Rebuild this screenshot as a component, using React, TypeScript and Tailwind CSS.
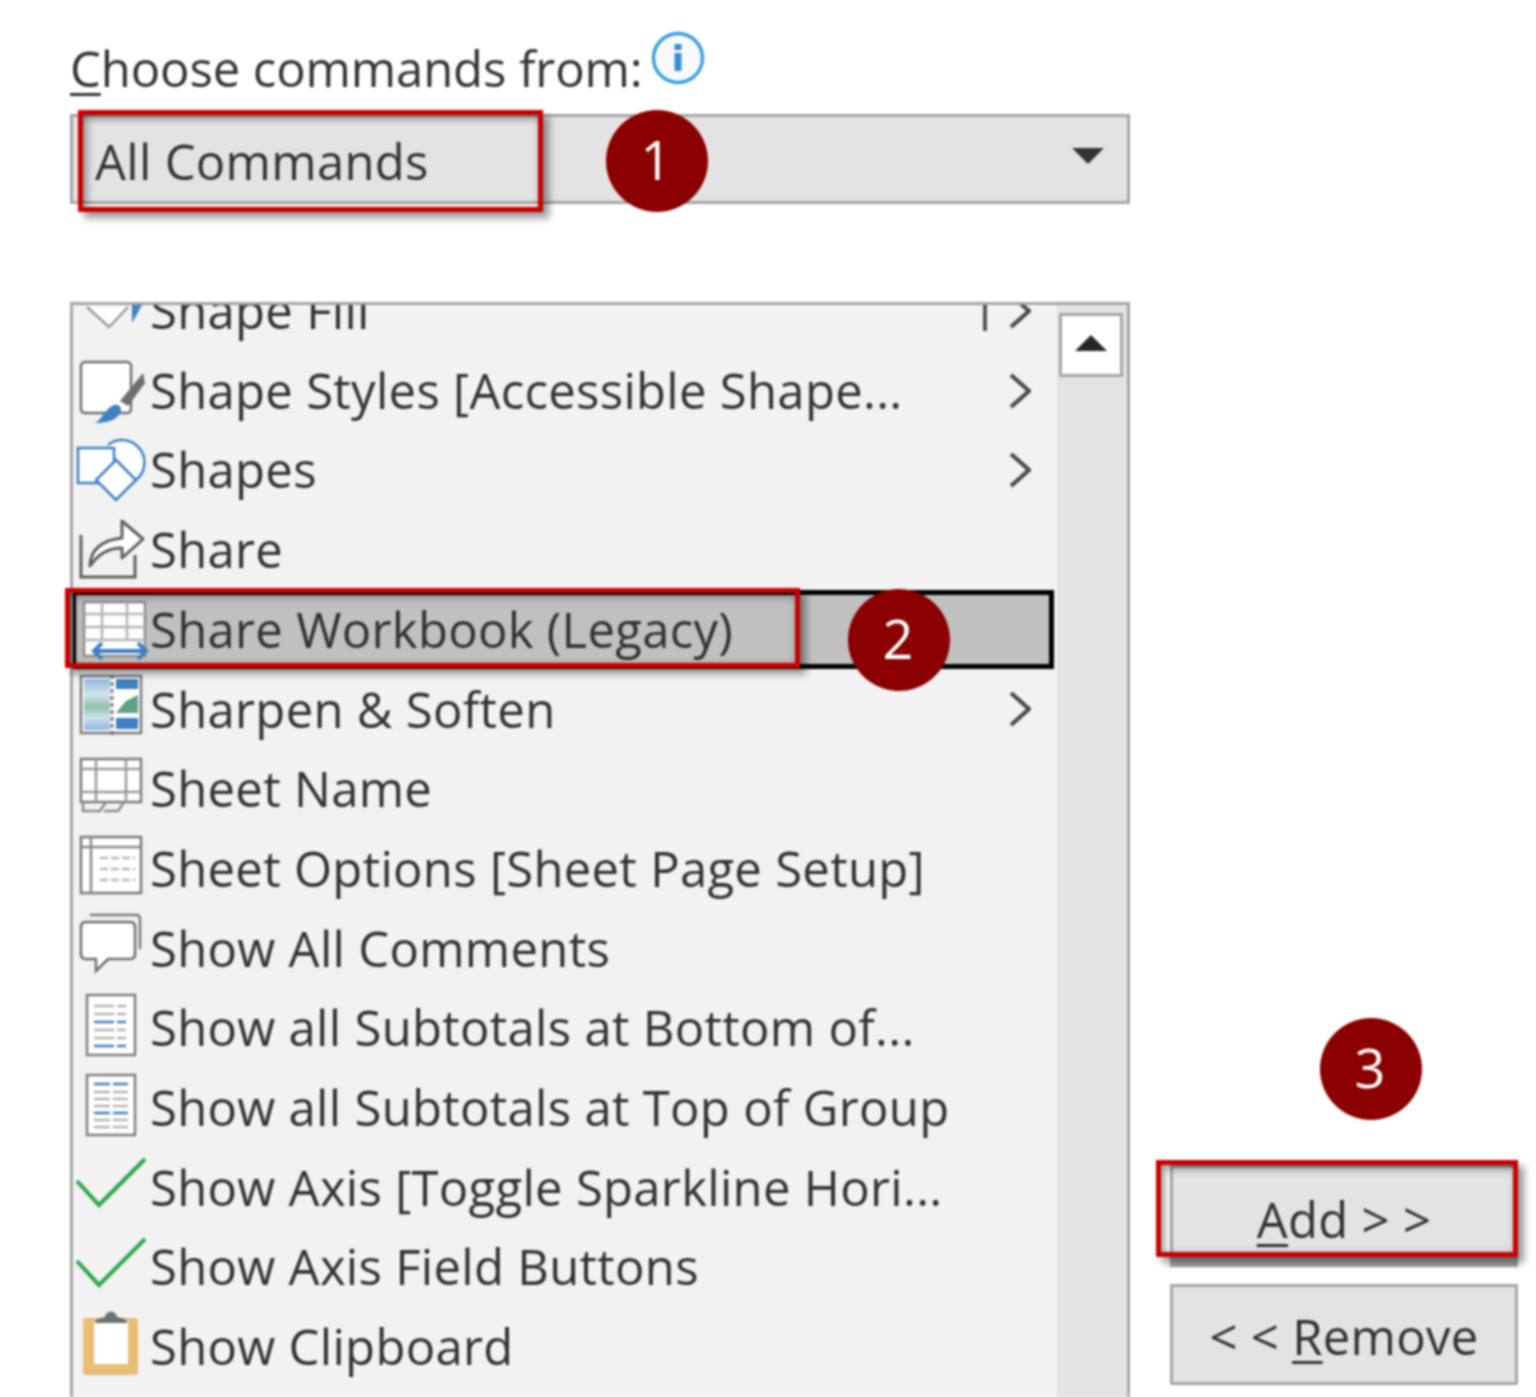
import type { ReactNode } from 'react';

const BLUE = '#3f80c4';

function Icon({ children }: { children: ReactNode }) {
  return (
    <svg className="h-[80px] w-[74px] shrink-0 overflow-visible" viewBox="0 0 74 80" fill="none">
      {children}
    </svg>
  );
}

const ICONS: Record<string, ReactNode> = {
  fill: (
    <Icon>
      <path d="M11 36 L33 56 L52 36" stroke="#9a9a9a" strokeWidth="2.5" fill="#fff" />
      <path d="M56 52 L66 34 L56 34 Z" fill={BLUE} />
    </Icon>
  ),
  styles: (
    <Icon>
      <rect x="5" y="11" width="50" height="51" rx="4" fill="#fff" stroke="#6f6f6f" strokeWidth="2.5" />
      <path d="M44 50 L67 22 L69 32 L52 55 Z" fill="#6f6f6f" />
      <path d="M19 72 C27 68 28 58 38 54 C45 52 47 60 43 64 C38 70 30 72 19 72 Z" fill={BLUE} />
    </Icon>
  ),
  shapes: (
    <Icon>
      <path d="M32 15 A22 22 0 1 1 60 50" stroke={BLUE} strokeWidth="2.5" fill="#fff" />
      <rect x="2" y="18" width="36" height="35" fill="#fff" stroke={BLUE} strokeWidth="2.5" />
      <path d="M40 30 L60 50 L40 70 L20 50 Z" fill="#fff" stroke={BLUE} strokeWidth="2.5" />
    </Icon>
  ),
  share: (
    <Icon>
      <path d="M5 25 V67 H59 V45" stroke="#5f5f5f" strokeWidth="3" />
      <path d="M14 56 C14 40 26 30 46 28 V11 L67 29 L46 48 V38 C32 38 22 44 14 56 Z" fill="#fff" stroke="#5f5f5f" strokeWidth="3" strokeLinejoin="round" />
    </Icon>
  ),
  workbook: (
    <Icon>
      <rect x="8" y="12" width="61" height="54" fill="#fff" stroke="#8a8a8a" strokeWidth="2.5" />
      <path d="M8 24 H69 M8 37 H69 M8 50 H69 M26 12 V50 M51 12 V50" stroke="#b4b4b4" strokeWidth="2.5" />
      <path d="M20 61 H68" stroke={BLUE} strokeWidth="4" />
      <path d="M26 53 L18 61 L26 69 M62 53 L70 61 L62 69" stroke={BLUE} strokeWidth="4" />
    </Icon>
  ),
  sharpen: (
    <Icon>
      <defs>
        <linearGradient id="soften" x1="0" y1="0" x2="0" y2="1">
          <stop offset="0" stopColor="#8fb8e4" />
          <stop offset="0.3" stopColor="#d5e3ef" />
          <stop offset="0.55" stopColor="#8fc2aa" />
          <stop offset="0.75" stopColor="#cfe0ea" />
          <stop offset="1" stopColor="#8fb8e4" />
        </linearGradient>
      </defs>
      <rect x="5" y="7" width="60" height="57" fill="#fff" stroke="#7a7a7a" strokeWidth="2.5" />
      <rect x="8" y="10" width="26" height="51" fill="url(#soften)" />
      <path d="M40 10 H62 V20 H40 Z" fill={BLUE} />
      <path d="M40 44 L50 32 L62 26 V44 Z" fill="#5fa08a" />
      <path d="M40 49 H62 V60 H40 Z" fill={BLUE} />
      <path d="M36 6 V66" stroke="#6a6a6a" strokeWidth="2.5" strokeDasharray="4 3" />
    </Icon>
  ),
  sheet: (
    <Icon>
      <rect x="5" y="10" width="60" height="43" fill="#fff" stroke="#7a7a7a" strokeWidth="2.5" />
      <path d="M5 20 H65 M5 43 H65 M20 10 V53 M50 10 V53" stroke="#9a9a9a" strokeWidth="2.5" />
      <path d="M7 53 V62 H24 L30 53 M28 62 H42 L48 53" stroke="#8a8a8a" strokeWidth="2.5" />
    </Icon>
  ),
  options: (
    <Icon>
      <rect x="5" y="8" width="60" height="56" fill="#fff" stroke="#7a7a7a" strokeWidth="2.5" />
      <path d="M5 18 H65 M15 8 V64" stroke="#8a8a8a" strokeWidth="2.5" />
      <path d="M24 29 H59 M24 40 H59 M24 51 H59" stroke="#b8b8b8" strokeWidth="2.5" strokeDasharray="8 3" />
    </Icon>
  ),
  comments: (
    <Icon>
      <path d="M14 7 H60 Q64 7 64 11 V41" stroke="#7a7a7a" strokeWidth="2.5" />
      <path d="M10 14 H54 Q59 14 59 19 V46 Q59 51 54 51 H32 L20 63 V51 H10 Q5 51 5 46 V19 Q5 14 10 14 Z" fill="#fff" stroke="#6f6f6f" strokeWidth="2.5" />
    </Icon>
  ),
  subBottom: (
    <Icon>
      <rect x="11" y="7" width="48" height="60" fill="#fff" stroke="#7f7f7f" strokeWidth="2.5" />
      <path d="M18 18 H50 M18 26 H50 M18 42 H50 M18 50 H50" stroke="#b4b4b4" strokeWidth="2.5" strokeDasharray="20 3 9 0" />
      <path d="M18 34 H50 M18 58 H50" stroke={BLUE} strokeWidth="2.5" strokeDasharray="20 3 9 0" />
    </Icon>
  ),
  subTop: (
    <Icon>
      <rect x="11" y="7" width="48" height="60" fill="#fff" stroke="#7f7f7f" strokeWidth="2.5" />
      <path d="M18 24 H52 M18 31 H52 M18 38 H52 M18 52 H52 M18 59 H52" stroke="#b4b4b4" strokeWidth="2.5" strokeDasharray="16 3 15 0" />
      <path d="M18 16 H52 M18 45 H52" stroke={BLUE} strokeWidth="2.5" strokeDasharray="16 3 15 0" />
    </Icon>
  ),
  check: (
    <Icon>
      <path d="M1 34 L23 58 L69 12" stroke="#2fa84f" strokeWidth="4" />
    </Icon>
  ),
  clipboard: (
    <Icon>
      <rect x="7" y="11" width="55" height="57" rx="3" fill="#e9bd76" />
      <rect x="18" y="14" width="34" height="43" fill="#fff" />
      <path d="M19 16 C19 11 26 11 29 10 C30 3 40 3 41 10 C44 11 51 11 51 16 Z" fill="#6f6f6f" />
    </Icon>
  ),
};

const ROWS = [
  { label: 'Shape Fill', icon: 'fill', arrow: true, split: true },
  { label: 'Shape Styles [Accessible Shape...', icon: 'styles', arrow: true },
  { label: 'Shapes', icon: 'shapes', arrow: true },
  { label: 'Share', icon: 'share' },
  { label: 'Share Workbook (Legacy)', icon: 'workbook', selected: true },
  { label: 'Sharpen & Soften', icon: 'sharpen', arrow: true },
  { label: 'Sheet Name', icon: 'sheet' },
  { label: 'Sheet Options [Sheet Page Setup]', icon: 'options' },
  { label: 'Show All Comments', icon: 'comments' },
  { label: 'Show all Subtotals at Bottom of...', icon: 'subBottom' },
  { label: 'Show all Subtotals at Top of Group', icon: 'subTop' },
  { label: 'Show Axis [Toggle Sparkline Hori...', icon: 'check' },
  { label: 'Show Axis Field Buttons', icon: 'check' },
  { label: 'Show Clipboard', icon: 'clipboard' },
];

function Chevron() {
  return (
    <svg className="h-[36px] w-[22px]" viewBox="0 0 22 36" fill="none">
      <path d="M2 2 L20 18 L2 34" stroke="#4a4a4a" strokeWidth="4" />
    </svg>
  );
}

function Badge({ n, className }: { n: number; className: string }) {
  return (
    <div
      className={`absolute flex h-[102px] w-[102px] items-center justify-center rounded-full bg-[#8b0000] pb-[5px] pr-[2px] text-[54px] leading-none tracking-normal text-white ${className}`}
    >
      {n}
    </div>
  );
}

function Callout({ className }: { className: string }) {
  return (
    <div
      className={`absolute border-[5px] border-[#cc0000] shadow-[6px_6px_7px_rgba(0,0,0,0.4),inset_3px_3px_8px_rgba(0,0,0,0.45)] ${className}`}
    />
  );
}

export default function App() {
  return (
    <div className="relative flex h-[1397px] w-[1536px] overflow-hidden bg-white pl-[70px] font-['Open_Sans',sans-serif] text-[49px] tracking-[0.3px] text-[#333] blur-[0.8px]">
      {/* Left column */}
      <div className="flex w-[1060px] shrink-0 flex-col">
        <div className="flex h-[114px] shrink-0 items-start pt-[35px] leading-[66px]">
          <span className="whitespace-nowrap tracking-[-0.1px]">
            <span className="underline decoration-[3px] underline-offset-[6px]">C</span>hoose commands from:
          </span>
          <svg className="ml-[8px] -mt-[4px] h-[54px] w-[54px] shrink-0" viewBox="0 0 54 54" fill="none">
            <circle cx="27" cy="27" r="24.5" stroke="#3b9fe0" strokeWidth="3.5" fill="#fafafa" />
            <rect x="23.5" y="13" width="7" height="6" fill="#2f8fd8" />
            <rect x="23.5" y="22" width="7" height="18" fill="#2f8fd8" />
          </svg>
        </div>

        {/* Combo */}
        <div className="flex h-[90px] shrink-0 items-center justify-between border-[3px] border-[#a6a6a6] bg-[#e3e3e3] pl-[22px] pr-[22px]">
          <span className="pt-[5px]">All Commands</span>
          <svg className="-mt-[6px] h-[18px] w-[34px]" viewBox="0 0 34 18">
            <path d="M1 1 H33 L17 17 Z" fill="#333" />
          </svg>
        </div>

        {/* Command list */}
        <div className="mt-[98px] flex min-h-0 flex-1 border-x-[3px] border-t-[3px] border-[#a6a6a6] bg-[#f2f2f2]">
          <div className="min-w-0 flex-1 overflow-hidden">
            <div className="-mt-[34px] pl-[3px]">
              {ROWS.map((row) => (
                <div
                  key={row.label}
                  className={`flex h-[79.7px] items-center pr-[26px] ${
                    row.selected ? '-ml-[5px] mr-[3px] border-[5px] border-black bg-[#c0c0c0]' : ''
                  }`}
                >
                  {ICONS[row.icon]}
                  <span className="whitespace-nowrap">{row.label}</span>
                  {row.arrow && (
                    <span className="ml-auto flex items-center">
                      {row.split && <span className="mr-[22px] h-[40px] w-[4px] bg-[#555]" />}
                      <Chevron />
                    </span>
                  )}
                </div>
              ))}
            </div>
          </div>

          {/* Scrollbar */}
          <div className="w-[70px] shrink-0 bg-[#e3e3e3] pl-[2px] pt-[8px]">
            <div className="flex h-[64px] w-[64px] items-center justify-center border-[3px] border-[#a6a6a6] bg-white">
              <svg className="-mt-[4px] h-[18px] w-[34px]" viewBox="0 0 34 18">
                <path d="M1 17 H33 L17 1 Z" fill="#262626" />
              </svg>
            </div>
          </div>
        </div>
      </div>

      {/* Buttons */}
      <div className="flex flex-1 flex-col justify-end pb-[12px] pl-[40px] pr-[18px]">
        <button
          type="button"
          className="mb-[17px] flex h-[102px] items-center justify-center border-[3px] border-b-[10px] border-[#a6a6a6] bg-[#e3e3e3] pt-[14px]"
        >
          <span className="whitespace-nowrap">
            <span className="underline decoration-[3px] underline-offset-[6px]">A</span>dd &gt; &gt;
          </span>
        </button>
        <button
          type="button"
          className="flex h-[101px] items-center justify-center border-[3px] border-[#a6a6a6] bg-[#e3e3e3] pt-[4px]"
        >
          <span className="whitespace-nowrap">
            &lt; &lt; <span className="underline decoration-[3px] underline-offset-[6px]">R</span>emove
          </span>
        </button>
      </div>

      {/* Annotations */}
      <Callout className="left-[78px] top-[110px] h-[102px] w-[465px]" />
      <Callout className="left-[65px] top-[588px] h-[80px] w-[735px]" />
      <Callout className="left-[1156px] top-[1160px] h-[97px] w-[362px]" />
      <Badge n={1} className="left-[606px] top-[110px]" />
      <Badge n={2} className="left-[848px] top-[589px]" />
      <Badge n={3} className="left-[1320px] top-[1018px]" />
    </div>
  );
}
